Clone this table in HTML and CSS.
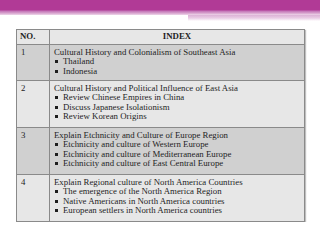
FILE: index.html
```html
<!DOCTYPE html>
<html lang="en">
<head>
    <meta charset="UTF-8">
    <title>Index</title>
    <link rel="stylesheet" href="styles.css">
</head>
<body>
    <div class="band"></div>
    <div class="band-tail"></div>

    <table class="index-table">
        <tr class="head">
            <th class="no">NO.</th>
            <th class="topic">INDEX</th>
        </tr>
        <tr class="dark r1">
            <td class="no">1</td>
            <td class="topic">
                Cultural History and Colonialism of Southeast Asia
                <ul>
                    <li>Thailand</li>
                    <li>Indonesia</li>
                </ul>
            </td>
        </tr>
        <tr class="light r4l">
            <td class="no">2</td>
            <td class="topic">
                Cultural History and Political Influence of East Asia
                <ul>
                    <li>Review Chinese Empires in China</li>
                    <li>Discuss Japanese Isolationism</li>
                    <li>Review Korean Origins</li>
                </ul>
            </td>
        </tr>
        <tr class="dark r4l">
            <td class="no">3</td>
            <td class="topic">
                Explain Etchnicity and Culture of Europe Region
                <ul>
                    <li>Etchnicity and culture of Western Europe</li>
                    <li>Etchnicity and culture of Mediterranean Europe</li>
                    <li>Etchnicity and culture of East Central Europe</li>
                </ul>
            </td>
        </tr>
        <tr class="light r4l">
            <td class="no">4</td>
            <td class="topic">
                Explain Regional culture of North America Countries
                <ul>
                    <li>The emergence of the North America Region</li>
                    <li>Native Americans in North America countries</li>
                    <li>European settlers in North America countries</li>
                </ul>
            </td>
        </tr>
    </table>
</body>
</html>
```

FILE: styles.css
```css
body {
    margin: 0;
    background: #ffffff;
    font-family: "Liberation Serif", serif;
    color: #1e1e1e;
}

.band {
    height: 15px;
    background: linear-gradient(to bottom, #b13a96 0, #b13a96 10px, #c272b6 11px, #d6a0cc 13px, #eed7ea 15px);
}

.band-tail {
    height: 6px;
    margin-left: 188px;
    background: linear-gradient(to bottom, #dcb2d6 0, #e9cde5 3px, #ffffff 6px);
}

.index-table {
    margin: 8px 0 0 16px;
    width: 289px;
    border-collapse: collapse;
    border: 1px solid #7a7a7a;
    box-shadow: 1px 1px 1px rgba(0, 0, 0, 0.25);
    font-size: 8.8px;
    line-height: 9.6px;
}

.index-table th,
.index-table td {
    border: 1px solid #8a8a8a;
    vertical-align: top;
    text-align: left;
    padding: 3px 3px 3px 4px;
}

.index-table .no {
    width: 25px;
}

.head {
    background: #e7e7e7;
    height: 14px;
}

.head th {
    padding: 2px 3px;
    font-weight: bold;
}

.head th.topic {
    text-align: center;
}

.dark {
    background: #d0d0d0;
}

.light {
    background: #e7e7e7;
}

.r1 {
    height: 36px;
}

.r4l {
    height: 47px;
}

.index-table ul {
    margin: 0;
    padding: 0;
    list-style: none;
}

.index-table li {
    display: flex;
    gap: 5px;
}

.index-table li::before {
    content: "";
    width: 3px;
    height: 3px;
    margin: 3px 0 0 1px;
    background: #1e1e1e;
    flex: none;
}
```
